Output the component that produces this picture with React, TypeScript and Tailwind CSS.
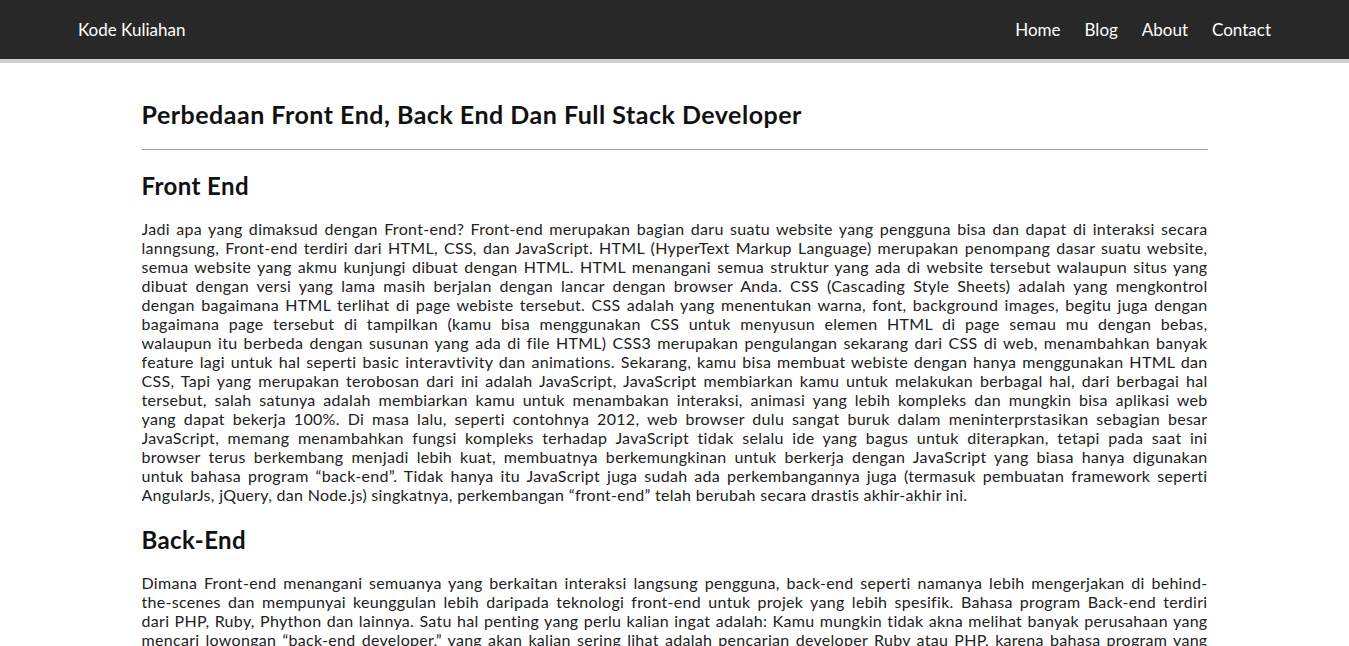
import React from "react";

const frontEnd = [
  "Jadi apa yang dimaksud dengan Front-end? Front-end merupakan bagian daru suatu website yang pengguna bisa dan dapat di interaksi secara",
  "lanngsung, Front-end terdiri dari HTML, CSS, dan JavaScript. HTML (HyperText Markup Language) merupakan penompang dasar suatu website,",
  "semua website yang akmu kunjungi dibuat dengan HTML. HTML menangani semua struktur yang ada di website tersebut walaupun situs yang",
  "dibuat dengan versi yang lama masih berjalan dengan lancar dengan browser Anda. CSS (Cascading Style Sheets) adalah yang mengkontrol",
  "dengan bagaimana HTML terlihat di page webiste tersebut. CSS adalah yang menentukan warna, font, background images, begitu juga dengan",
  "bagaimana page tersebut di tampilkan (kamu bisa menggunakan CSS untuk menyusun elemen HTML di page semau mu dengan bebas,",
  "walaupun itu berbeda dengan susunan yang ada di file HTML) CSS3 merupakan pengulangan sekarang dari CSS di web, menambahkan banyak",
  "feature lagi untuk hal seperti basic interavtivity dan animations. Sekarang, kamu bisa membuat webiste dengan hanya menggunakan HTML dan",
  "CSS, Tapi yang merupakan terobosan dari ini adalah JavaScript, JavaScript membiarkan kamu untuk melakukan berbagal hal, dari berbagai hal",
  "tersebut, salah satunya adalah membiarkan kamu untuk menambakan interaksi, animasi yang lebih kompleks dan mungkin bisa aplikasi web",
  "yang dapat bekerja 100%. Di masa lalu, seperti contohnya 2012, web browser dulu sangat buruk dalam meninterprstasikan sebagian besar",
  "JavaScript, memang menambahkan fungsi kompleks terhadap JavaScript tidak selalu ide yang bagus untuk diterapkan, tetapi pada saat ini",
  "browser terus berkembang menjadi lebih kuat, membuatnya berkemungkinan untuk berkerja dengan JavaScript yang biasa hanya digunakan",
  "untuk bahasa program \u201cback-end\u201d. Tidak hanya itu JavaScript juga sudah ada perkembangannya juga (termasuk pembuatan framework seperti",
  "AngularJs, jQuery, dan Node.js) singkatnya, perkembangan \u201cfront-end\u201d telah berubah secara drastis akhir-akhir ini.",
];

const backEnd = [
  "Dimana Front-end menangani semuanya yang berkaitan interaksi langsung pengguna, back-end seperti namanya lebih mengerjakan di behind-",
  "the-scenes dan mempunyai keunggulan lebih daripada teknologi front-end untuk projek yang lebih spesifik. Bahasa program Back-end terdiri",
  "dari PHP, Ruby, Phython dan lainnya. Satu hal penting yang perlu kalian ingat adalah: Kamu mungkin tidak akna melihat banyak perusahaan yang",
  "mencari lowongan \u201cback-end developer,\u201d yang akan kalian sering lihat adalah pencarian developer Ruby atau PHP, karena bahasa program yang",
  "digunakan untuk back-end sangat beragam dan masing-masing perusahaan memiliki kebutuhan yang berbeda-beda.",
];

function Para({ lines }: { lines: string[] }) {
  return (
    <p className="text-[16px] leading-[19px] tracking-[0.3px] text-[#222] text-justify">
      {lines.map((l, i) => (
        <span
          key={i}
          className={
            i === lines.length - 1
              ? "block whitespace-nowrap"
              : "block whitespace-nowrap [text-align-last:justify]"
          }
        >
          {l}
        </span>
      ))}
    </p>
  );
}

export default function App() {
  return (
    <div
      className="min-h-screen bg-white"
      style={{ fontFamily: "Lato, 'Open Sans', sans-serif" }}
    >
      <nav className="h-[59px] bg-[#282828] border-b-4 border-[#cfcfcf] box-content">
        <div className="mx-auto flex h-full w-[1193px] items-center justify-between">
          <span className="text-[17px] text-white">Kode Kuliahan</span>
          <ul className="flex items-center gap-[24px] text-[17px] text-white">
            <li>Home</li>
            <li>Blog</li>
            <li>About</li>
            <li>Contact</li>
          </ul>
        </div>
      </nav>
      <main className="mx-auto w-[1066px] overflow-hidden">
        <h1 className="mt-[37px] text-[25px] leading-[29px] tracking-[0.5px] font-bold text-[#111]">
          Perbedaan Front End, Back End Dan Full Stack Developer
        </h1>
        <hr className="mt-[20px] border-0 h-px bg-[#9a9a9a]" />
        <h2 className="mt-[21px] text-[24px] leading-[29px] tracking-[0.4px] font-bold text-[#111]">
          Front End
        </h2>
        <div className="mt-[19px]">
          <Para lines={frontEnd} />
        </div>
        <h2 className="mt-[21px] text-[24px] leading-[29px] tracking-[0.4px] font-bold text-[#111]">
          Back-End
        </h2>
        <div className="mt-[19px] pb-10">
          <Para lines={backEnd} />
        </div>
      </main>
    </div>
  );
}
